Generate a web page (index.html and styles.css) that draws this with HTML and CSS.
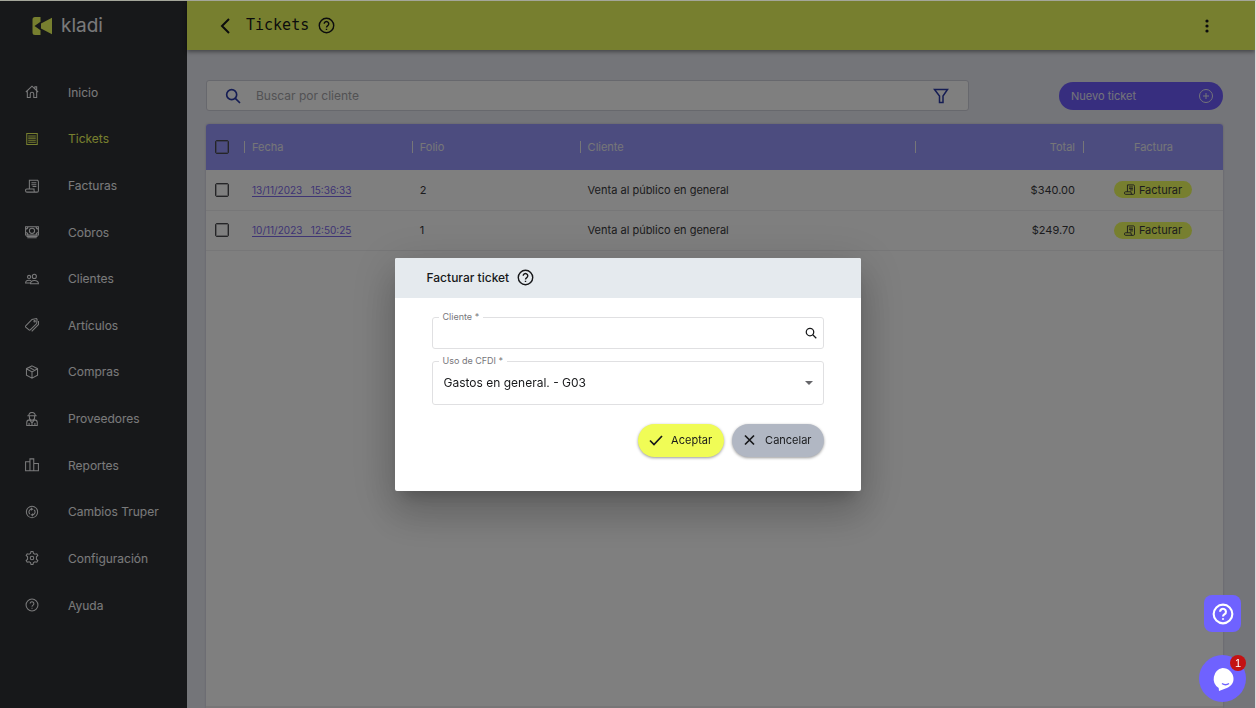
FILE: index.html
```html
<!DOCTYPE html>
<html lang="es">
<head>
<meta charset="utf-8">
<meta name="viewport" content="width=device-width, initial-scale=1">
<title>Kladi - Tickets</title>
<link rel="stylesheet" href="styles.css">
</head>
<body>
<svg class="sprite" aria-hidden="true">
  <symbol id="help" viewBox="0 0 24 24"><circle cx="12" cy="12" r="10.2"/><path d="M8.800 9.600a3.200 3.200 0 1 1 5 2.600c-1.100.8-1.800 1.300-1.800 2.600M12 16.600v1.800"/></symbol>
  <symbol id="invoice" viewBox="0 0 24 24"><path d="M7.500 15V2h14c1 1 1.500 2 1.500 3v15a2.500 2.500 0 0 1-2.500 2.500H3.500A2.500 2.500 0 0 1 1 20v-1a2 2 0 0 1 2-2h12.500v2.500c0 2 1 3 2.500 3M11 6.500h8.500M11 10h8.500M13 13h6.500M7.500 14v3"/></symbol>
  <symbol id="search" viewBox="0 0 24 24"><circle cx="10" cy="10" r="7.500"/><path d="m15.500 15.500 7 7"/></symbol>
</svg>
<div class="app">
  <aside class="sidebar">
    <a class="brand" href="#">
      <svg class="brand-mark" viewBox="0 0 20 18"><path d="M3 0h5.500v4.800L2.500 9l6 4.200V18H3a2.500 2.500 0 0 1-2.500-2.500v-13A2.500 2.500 0 0 1 3 0zM20 .8v16.400L9 11.500v-5z"/></svg>
      <span>kladi</span>
    </a>
    <nav class="menu">
      <a href="#"><svg class="icon" viewBox="0 0 24 24"><path d="M1.500 12 12 2l10.500 10M4 10.500V21.500h5v-6a3 3 0 0 1 6 0v6h5v-11M17 6.500V3h3v6.500"/></svg>Inicio</a>
      <a href="#" class="active"><svg class="icon" viewBox="0 0 24 24"><path d="M3 2.500h18v19H3zM5.500 7h13M5.500 10.500h13M5.500 14h13M5.500 17.500h13"/></svg>Tickets</a>
      <a href="#"><svg class="icon"><use href="#invoice"/></svg>Facturas</a>
      <a href="#"><svg class="icon" viewBox="0 0 24 24"><path d="M1 3h22v14H1zM2.500 19.500h19M4 22h16M1 7c2 0 4-2 4-4M19 3c0 2 2 4 4 4M1 13c2 0 4 2 4 4M19 17c0-2 2-4 4-4"/><circle cx="12" cy="10" r="4.500"/></svg>Cobros</a>
      <a href="#"><svg class="icon" viewBox="0 0 24 24"><circle cx="16" cy="7.500" r="3.500"/><circle cx="7" cy="8.500" r="2.700"/><path d="M9.500 20c0-4 3-5.500 6.500-5.500s7 1.500 7 5.500zM9 19H1c0-3.500 2.500-5 6-5 1.500 0 2.500.2 3.500.8"/></svg>Clientes</a>
      <a href="#"><svg class="icon" viewBox="0 0 24 24"><path d="M1.200 13.500 12 2.500l7.500-1.500 1.200 1.200L20 9.500 9 20.500a1.500 1.500 0 0 1-2.200 0l-5.600-4.800a1.500 1.500 0 0 1 0-2.200zM23 5l.3 6L11.500 23"/><circle cx="16.500" cy="5.500" r="1.200"/></svg>Artículos</a>
      <a href="#"><svg class="icon" viewBox="0 0 24 24"><path d="m12 1.500 9.500 4.800v11L12 22.500l-9.500-5.200v-11zM2.500 6.500 12 12l9.500-5.500M12 12v10.500M7 4l9.500 5.200"/></svg>Compras</a>
      <a href="#"><svg class="icon" viewBox="0 0 24 24"><path d="M4 6.500h16M6.500 6.500C6.500 3 8.500.8 12 .8s5.500 2.200 5.500 5.700M7.500 7v2.500a4.500 4.500 0 0 0 9 0V7M3 23.200V18c0-2.500 2-4.500 5-4.500l4 5 4-5c3 0 5 2 5 4.500v5.200zM12 18.500v4.500M7 19v4M17 19v4"/></svg>Proveedores</a>
      <a href="#"><svg class="icon" viewBox="0 0 24 24"><path d="M1 6.500h7.500v15.500H1zM8.500 1.500h6.500V22H8.500zM15 9.500h8V22h-8z"/></svg>Reportes</a>
      <a href="#"><svg class="icon" viewBox="0 0 24 24"><circle cx="12" cy="12" r="9.700"/><path d="M8.300 15.500a5 5 0 0 1 4.200-8.500l-2-2.200M12.500 7l-2.300 2M15.700 8.500a5 5 0 0 1-4.200 8.500l2 2.200M11.500 17l2.300-2"/></svg>Cambios Truper</a>
      <a href="#"><svg class="icon" viewBox="0 0 24 24"><path d="M9.500 4.200 10.300 1h3.400l.8 3.200 2.500 1.400 3.200-.9 1.800 3-2.400 2.300v4l2.400 2.300-1.800 3-3.200-.9-2.500 1.400-.8 3.200h-3.400l-.8-3.200L7 18.400l-3.200.9-1.800-3L4.400 14v-4L2 7.700l1.800-3 3.200.9z"/><circle cx="12" cy="12" r="3"/></svg>Configuración</a>
      <a href="#"><svg class="icon"><use href="#help"/></svg>Ayuda</a>
    </nav>
  </aside>

  <div class="page">
    <header class="topbar">
      <button class="plain" aria-label="Volver"><svg class="back" viewBox="0 0 16 16"><path d="M11 1 4 8l7 7"/></svg></button>
      <h1>Tickets</h1>
      <button class="plain" aria-label="Ayuda"><svg class="help"><use href="#help"/></svg></button>
      <button class="plain more" aria-label="Más opciones"><svg viewBox="0 0 16 16"><circle cx="8" cy="3" r="1.600"/><circle cx="8" cy="8" r="1.600"/><circle cx="8" cy="13" r="1.600"/></svg></button>
    </header>

    <main class="content">
      <div class="toolbar">
        <div class="search">
          <svg><use href="#search"/></svg>
          <input type="search" placeholder="Buscar por cliente" aria-label="Buscar por cliente">
          <button class="plain" aria-label="Filtrar"><svg viewBox="0 0 16 16"><path d="M1.500 1.500h13L10 8v6.500H6.500V8z"/></svg></button>
        </div>
        <button class="new-ticket">Nuevo ticket
          <svg viewBox="0 0 16 16"><circle cx="8" cy="8" r="6.500"/><path d="M8 5v6M5 8h6"/></svg>
        </button>
      </div>

      <div class="panel">
        <table>
          <colgroup><col class="c-check"><col class="c-std"><col class="c-std"><col class="c-client"><col class="c-std"><col class="c-action"></colgroup>
          <thead>
            <tr>
              <th><input type="checkbox" aria-label="Seleccionar todos"></th>
              <th><span>Fecha</span></th>
              <th><span>Folio</span></th>
              <th><span>Cliente</span></th>
              <th class="num"><span>Total</span></th>
              <th class="action"><span>Factura</span></th>
            </tr>
          </thead>
          <tbody>
            <tr>
              <td><input type="checkbox" aria-label="Seleccionar folio 2"></td>
              <td><a href="#">13/11/2023 &nbsp; 15:36:33</a></td>
              <td>2</td>
              <td>Venta al público en general</td>
              <td class="num">$340.00</td>
              <td class="action"><button class="bill"><svg><use href="#invoice"/></svg>Facturar</button></td>
            </tr>
            <tr>
              <td><input type="checkbox" aria-label="Seleccionar folio 1"></td>
              <td><a href="#">10/11/2023 &nbsp; 12:50:25</a></td>
              <td>1</td>
              <td>Venta al público en general</td>
              <td class="num">$249.70</td>
              <td class="action"><button class="bill"><svg><use href="#invoice"/></svg>Facturar</button></td>
            </tr>
          </tbody>
        </table>
      </div>
    </main>
  </div>
</div>

<div class="backdrop">
  <form class="dialog" role="dialog" aria-modal="true" aria-labelledby="dialog-title">
    <div class="dialog-head">
      <h2 id="dialog-title">Facturar ticket</h2>
      <button type="button" class="plain" aria-label="Ayuda"><svg class="help"><use href="#help"/></svg></button>
    </div>
    <div class="dialog-body">
      <div class="field">
        <label for="cliente">Cliente *</label>
        <input id="cliente" type="text">
        <button type="button" class="plain" aria-label="Buscar cliente"><svg><use href="#search"/></svg></button>
      </div>
      <div class="field tall">
        <label for="uso">Uso de CFDI *</label>
        <select id="uso"><option>Gastos en general. - G03</option></select>
        <svg class="caret" viewBox="0 0 8 4"><path d="M0 0h8L4 4z"/></svg>
      </div>
      <div class="actions">
        <button type="submit" class="pill accept"><svg viewBox="0 0 16 16"><path d="m2 8.500 4 4L14 4"/></svg>Aceptar</button>
        <button type="button" class="pill cancel"><svg viewBox="0 0 16 16"><path d="m3 3.500 9 9M12 3.500l-9 9"/></svg>Cancelar</button>
      </div>
    </div>
  </form>
</div>

<div class="floating">
  <button class="help-fab" aria-label="Centro de ayuda"><svg><use href="#help"/></svg></button>
  <button class="chat-fab" aria-label="Chat">
    <svg viewBox="0 0 24 24"><path class="bubble" d="M11.500 1a11 11 0 0 1 11 11c0 5.500-4 8-8 9.500l-6.500 2.500-.3-3A11 11 0 0 1 11.500 1z"/><path class="smile" d="M11 16.500c2 1.500 5 1.500 7 0"/></svg>
    <span class="badge">1</span>
  </button>
</div>
</body>
</html>
```

FILE: styles.css
```css
* { box-sizing: border-box; }

body {
  margin: 0;
  border-top: 1px solid #a4a69a;
  border-right: 1px solid #d8d8dc;
  font-family: Inter, "Open Sans", sans-serif;
  font-size: 11px;
  color: #17181a;
}

button, input, select { font: inherit; color: inherit; }
button { cursor: pointer; }
svg { fill: none; stroke: currentColor; stroke-width: 1.5; flex: none; display: block; }
h1, h2 { margin: 0; font-weight: 400; }

.sprite { position: absolute; width: 0; height: 0; }
.plain { display: flex; padding: 0; border: 0; background: none; }
.help { width: 17px; height: 17px; stroke-width: 2; }

.app {
  display: grid;
  grid-template-columns: 187px 1fr;
  min-height: calc(100vh - 1px);
}

/* Sidebar */
.sidebar {
  background: #2e3034;
  color: #f4f4f6;
}
.brand {
  display: flex;
  align-items: center;
  gap: 9px;
  height: 49px;
  padding-left: 32px;
  color: inherit;
  font: 400 19px/24px Inter, sans-serif;
  text-decoration: none;
}
.brand-mark { width: 20px; height: 18px; fill: #eefe5e; stroke: none; }
.menu {
  display: grid;
  grid-auto-rows: 1fr;
  height: 79vh;
  min-height: 480px;
  margin-top: 19px;
}
.menu a {
  display: flex;
  align-items: center;
  gap: 29px;
  padding-left: 25px;
  color: inherit;
  font-size: 12px;
  text-decoration: none;
}
.menu .active { color: #eefe5e; }
.icon { width: 14px; height: 14px; stroke-width: 1.8; }

/* Page */
.page {
  display: flex;
  flex-direction: column;
  min-width: 0;
  background: #e8eaf2;
}
.topbar {
  display: flex;
  align-items: center;
  gap: 9px;
  height: 49px;
  padding: 0 40px 0 31px;
  background: #eefe5e;
  box-shadow: 0 2px 4px rgba(0, 0, 0, .4);
}
.topbar h1 {
  padding: 0 0 2px 3px;
  font: 15px/20px "DejaVu Sans Mono", monospace;
}
.back { width: 16px; height: 16px; stroke-width: 2; }
.more { margin-left: auto; }
.more svg { width: 16px; height: 16px; fill: currentColor; stroke: none; }

.content {
  flex: 1;
  display: flex;
  flex-direction: column;
  gap: 13px;
  padding: 30px 32px 0 19px;
}
.toolbar {
  display: flex;
  align-items: center;
  justify-content: space-between;
}
.search {
  display: flex;
  align-items: center;
  gap: 15px;
  width: 75%;
  height: 31px;
  padding: 0 19px 0 18px;
  border: 1px solid #cfd0da;
  border-radius: 3px;
  background: #fff;
  color: #2a3aa8;
}
.search svg { width: 16px; height: 16px; stroke-width: 2.5; }
.search button svg { stroke-width: 1.5; }
.search input {
  flex: 1;
  min-width: 0;
  padding: 0;
  border: 0;
  outline: 0;
  background: none;
  font-size: 12px;
}
.search input::placeholder { color: #a4a4a8; opacity: 1; }
.new-ticket {
  display: flex;
  align-items: center;
  justify-content: space-between;
  width: 164px;
  height: 28px;
  padding: 0 9px 0 12px;
  border: 0;
  border-radius: 14px;
  background: #6f5cff;
  color: #e8e8f2;
}
.new-ticket svg { width: 16px; height: 16px; stroke-width: 1; }

/* Tickets table */
.panel {
  flex: 1;
  border-bottom: 2px solid #eeecee;
  border-radius: 3px 3px 0 0;
  background: #fff;
  box-shadow: 0 0 2px rgba(80, 60, 90, .3);
  overflow: hidden;
}
table {
  width: 100%;
  table-layout: fixed;
  border-collapse: collapse;
  color: #38383c;
}
.c-check { width: 38px; }
.c-std { width: 16.5%; }
.c-client { width: 33%; }
th, td {
  padding: 0 8px;
  text-align: left;
  font-weight: 400;
  white-space: nowrap;
}
thead tr { height: 46px; background: #9999ff; color: #ececf0; }
th + th { padding: 0; }
th + th span { display: block; padding: 0 7px; border-left: 1px solid #ececf0; line-height: 12px; }
th.num span, th.action span { padding: 0 8px; }
tbody tr { height: 40px; border-bottom: 1px solid #efeff1; }
.num { text-align: right; }
.action { text-align: center; }
td a { color: #7d68e8; font-size: 10px; text-underline-offset: 2px; }
input[type="checkbox"] {
  appearance: none;
  display: block;
  width: 14px;
  height: 14px;
  margin: 0 0 0 1px;
  border: 1px solid #4a4a4e;
  border-radius: 2px;
  box-shadow: inset 0 0 0 1px rgba(74, 74, 78, .4);
}
.bill {
  display: inline-flex;
  align-items: center;
  justify-content: center;
  gap: 4px;
  width: 78px;
  height: 17px;
  padding: 0;
  border: 0;
  border-radius: 9px;
  background: #eefe5e;
  vertical-align: middle;
}
.bill svg { width: 11px; height: 11px; stroke-width: 2; }

/* Dialog */
.backdrop {
  position: fixed;
  inset: 1px 1px 0 0;
  display: flex;
  align-items: center;
  justify-content: center;
  padding-top: 39px;
  background: rgba(0, 0, 0, .5);
}
.dialog {
  width: 466px;
  border-radius: 2px;
  background: #fff;
  overflow: hidden;
  box-shadow: 0 11px 15px -7px rgba(0, 0, 0, .2), 0 24px 38px 3px rgba(0, 0, 0, .14), 0 9px 46px 8px rgba(0, 0, 0, .12);
}
.dialog-head {
  display: flex;
  align-items: center;
  gap: 8px;
  height: 40px;
  padding: 0 32px;
  background: #e5eaee;
}
.dialog-head h2 { font-size: 12px; font-weight: 500; }
.dialog-body {
  display: flex;
  flex-direction: column;
  gap: 12px;
  padding: 19px 37px 34px;
}
.field {
  position: relative;
  display: flex;
  align-items: center;
  height: 32px;
  padding: 0 6px 0 11px;
  border: 1px solid #e0e0e2;
  border-radius: 3px;
}
.tall { height: 44px; padding-right: 10px; }
.field label {
  position: absolute;
  top: -7px;
  left: 6px;
  padding: 0 4px;
  background: #fff;
  color: #77777b;
  font-size: 9px;
  line-height: 12px;
}
.field input, .field select {
  appearance: none;
  flex: 1;
  min-width: 0;
  padding: 0;
  border: 0;
  outline: 0;
  background: none;
  font-size: 12px;
}
.field button svg { width: 12px; height: 12px; stroke-width: 2.5; }
.caret { width: 8px; height: 4px; fill: #66666a; stroke: none; }
.actions {
  display: flex;
  justify-content: flex-end;
  gap: 8px;
  padding-top: 7px;
}
.pill {
  display: flex;
  align-items: center;
  gap: 7px;
  height: 33px;
  padding: 0 12px 0 10px;
  border: 0;
  border-radius: 17px;
  box-shadow: 0 1px 3px rgba(0, 0, 0, .4);
}
.pill svg { width: 16px; height: 16px; stroke-width: 1.7; }
.accept { background: #f0fc56; }
.cancel { background: #b1b7c3; }

/* Floating widgets */
.floating {
  position: fixed;
  right: 10px;
  bottom: 6px;
  display: flex;
  flex-direction: column;
  align-items: flex-end;
  gap: 23px;
  color: #fff;
}
.help-fab, .chat-fab {
  display: grid;
  place-items: center;
  padding: 0;
  border: 0;
  background: #6f62ff;
}
.help-fab { width: 37px; height: 37px; margin-right: 5px; border-radius: 8px; }
.help-fab svg { width: 22px; height: 22px; stroke-width: 2.3; }
.chat-fab { position: relative; width: 47px; height: 47px; border-radius: 50%; }
.chat-fab svg { width: 24px; height: 24px; }
.bubble { fill: #fff; stroke: none; }
.smile { stroke: #6f62ff; stroke-width: 1.5; }
.badge {
  position: absolute;
  top: 0;
  right: 0;
  width: 16px;
  border-radius: 8px;
  background: #c41212;
  font: 11px/16px "Liberation Sans", sans-serif;
}
```
